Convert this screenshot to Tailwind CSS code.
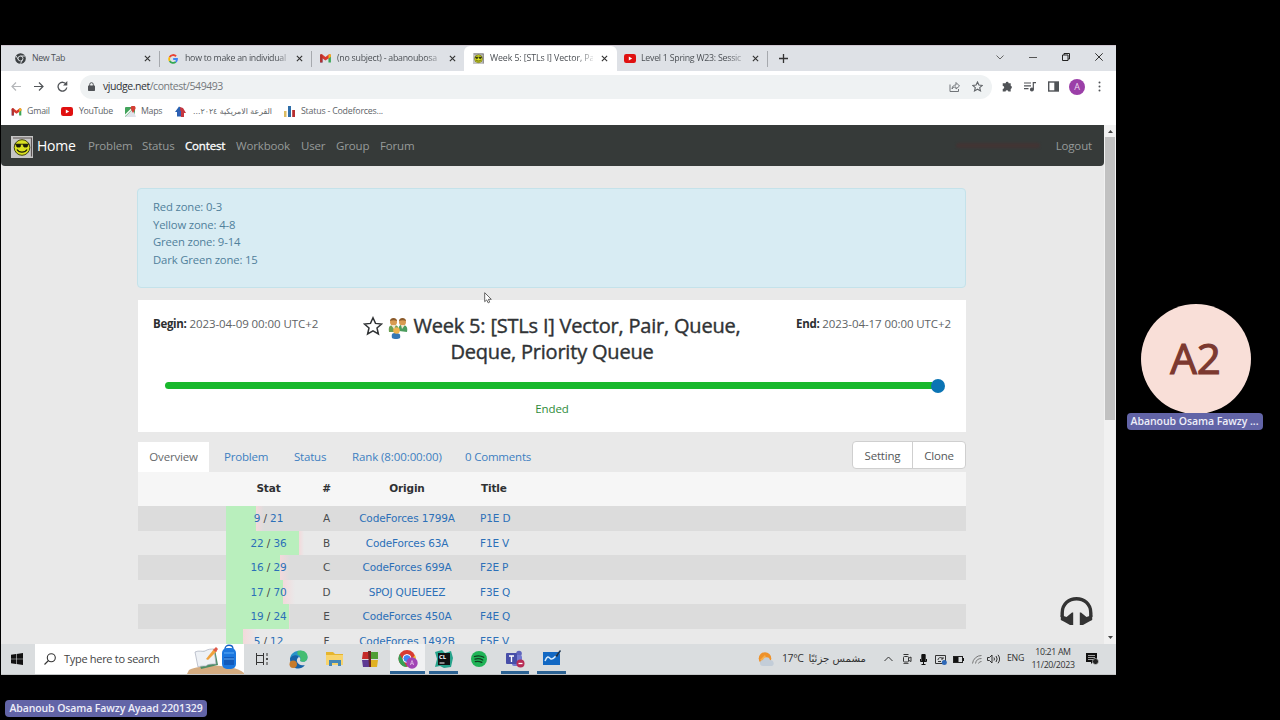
<!DOCTYPE html>
<html lang="en">
<head>
  <meta charset="UTF-8" />
  <meta name="viewport" content="width=device-width, initial-scale=1.0" />
  <script src="https://cdn.jsdelivr.net/npm/@tailwindcss/browser@4"></script>
  <title>Week 5: [STLs I] Vector, Pair, Queue, Deque, Priority Queue</title>
</head>
<body class="bg-black w-[1280px] h-[720px] overflow-hidden flex font-['Open_Sans','DejaVu_Sans',sans-serif] whitespace-nowrap">

  <!-- Shared icons -->
  <svg class="hidden">
    <symbol id="close" viewBox="0 0 8 8"><path d="M1 1l6 6M7 1l-6 6" stroke="#333" stroke-width="1.3" fill="none"/></symbol>
    <symbol id="gmail" viewBox="0 0 12 10">
      <path d="M0 1.5V9.5h2.7V4z" fill="#4a7fd6"/><path d="M12 1.5V9.5H9.300V4z" fill="#3aa757"/>
      <path d="M0 1.500C0 .2 1.500-.2 2.500 .6L6 3.400 9.500 .6C10.500-.2 12 .2 12 1.500V3L6 7.300 0 3z" fill="#d93a30"/>
      <path d="M9.300 1v4L12 3V1.500C12 0 10.500-.2 9.300 1z" fill="#f2b51e"/>
      <path d="M0 1.500V9.500h2.700V1C1.500-.2 0 0 0 1.500z" fill="#b5302a"/>
    </symbol>
    <symbol id="youtube" viewBox="0 0 12 9"><rect width="12" height="9" rx="2.200" fill="#e01010"/><path d="M4.800 2.500v4L8.200 4.500z" fill="#fff"/></symbol>
    <symbol id="smiley" viewBox="0 0 22 22">
      <rect width="22" height="22" fill="#c6c6c6"/><path d="M2 2h18.500v18.500" fill="none" stroke="#5c5555" stroke-width="1.200"/>
      <circle cx="11" cy="11.500" r="7.800" fill="#d9e021" stroke="#43460c"/>
      <path d="M3.500 8.200h15M5 8.500h4.700l-.6 2.500H6zM12 8.500h5l-1 2.500h-3z" fill="#1b1b0a" stroke="#1b1b0a" stroke-width=".8"/>
      <path d="M6 13.500c2 3.500 8 3.500 10 0" fill="none" stroke="#1b1b0a" stroke-width="1.200"/>
    </symbol>
  </svg>

  <!-- Shared screen -->
  <div class="w-[1116px] h-full shrink-0 flex flex-col pl-px">
    <div class="h-[45px] shrink-0"></div>

    <main class="h-[630px] flex flex-col bg-[#e9e9e9] overflow-hidden">

      <!-- Tab strip -->
      <div class="h-[26px] shrink-0 flex items-center bg-[#dee1e6] border-t border-[#cfc6d0] text-[8.800px] text-[#4c5055]">
        <div class="w-[159px] h-4 shrink-0 flex items-center pl-[14px] pr-2 border-r border-[#a6a9ae]">
          <svg class="size-[11px] mr-[6px]" viewBox="0 0 12 12"><circle cx="6" cy="6" r="5.800" fill="#3c4043"/><circle cx="6" cy="6" r="2.700" fill="#3c4043" stroke="#dee1e6"/><path d="M6 3.300h5M3.700 7.300L1.200 3.200M8.300 7.300L6 11.500" stroke="#dee1e6"/></svg>
          <span class="flex-1 tracking-[-0.4px]">New Tab</span>
          <svg class="size-[7px]"><use href="#close"/></svg>
        </div>
        <div class="w-[152px] h-4 shrink-0 flex items-center pl-2 pr-2 border-r border-[#a6a9ae]">
          <svg class="size-[10px] mr-[7px]" viewBox="0 0 12 12" fill="none" stroke-width="2.200"><path d="M9.700 2.700A4.800 4.800 0 0 0 2 3.800" stroke="#ea4335"/><path d="M2 3.800a4.800 4.800 0 0 0 0 4.500" stroke="#fbbc05"/><path d="M2 8.300a4.800 4.800 0 0 0 7.300 1.200" stroke="#34a853"/><path d="M9.300 9.500A4.800 4.800 0 0 0 10.800 6H6.200" stroke="#4285f4"/></svg>
          <span class="w-[104px] tracking-[-0.27px] [mask-image:linear-gradient(90deg,#000_88%,#0003)]">how to make an individual</span>
          <svg class="size-[7px] ml-auto"><use href="#close"/></svg>
        </div>
        <div class="w-[152px] h-4 shrink-0 flex items-center pl-2 pr-2">
          <svg class="w-[11px] h-[9px] mr-[6px]"><use href="#gmail"/></svg>
          <span class="w-[104px] tracking-[-0.25px] [mask-image:linear-gradient(90deg,#000_85%,#0003)]">(no subject) - abanoubosa</span>
          <svg class="size-[7px] ml-auto"><use href="#close"/></svg>
        </div>
        <div class="w-[153px] h-full shrink-0 flex items-center pl-[9px] pr-[9px] bg-white rounded-t-md">
          <svg class="size-[11px] mr-[6px]"><use href="#smiley"/></svg>
          <span class="w-[103px] tracking-[-0.1px] [mask-image:linear-gradient(90deg,#000_85%,#0003)]">Week 5: [STLs I] Vector, Pa</span>
          <svg class="size-[7px] ml-auto"><use href="#close"/></svg>
        </div>
        <div class="w-[151px] h-4 shrink-0 flex items-center pl-[7px] pr-2 border-r border-[#a6a9ae]">
          <svg class="w-3 h-[9px] mr-[5px]"><use href="#youtube"/></svg>
          <span class="w-[103px] tracking-[-0.25px] [mask-image:linear-gradient(90deg,#000_85%,#0003)]">Level 1 Spring W23: Sessic</span>
          <svg class="size-[7px] ml-auto"><use href="#close"/></svg>
        </div>
        <svg class="size-[9px] ml-[11px]" viewBox="0 0 9 9"><path d="M4.500 0v9M0 4.500h9" stroke="#333" stroke-width="1.300"/></svg>
        <div class="ml-auto mr-[13px] mb-[3px] flex items-center gap-[25px]">
          <svg class="size-2" viewBox="0 0 8 8" fill="none" stroke="#666"><path d="M.5 2.500L4 6l3.500-3.500"/></svg>
          <svg class="size-2" viewBox="0 0 8 8" stroke="#555"><path d="M0 4.500h8"/></svg>
          <svg class="size-2" viewBox="0 0 8 8" fill="none" stroke="#222"><path d="M.5 2h5.500v5.500H.5zM2 2V.5h5.500V6H6"/></svg>
          <svg class="size-2" viewBox="0 0 8 8" stroke="#333"><path d="M.3.300l7.400 7.400M7.700.300L.3 7.700"/></svg>
        </div>
      </div>

      <!-- Toolbar -->
      <div class="h-[31px] shrink-0 flex items-center bg-white pl-[10px]">
        <svg class="w-[10px] h-[9px]" viewBox="0 0 10 9" fill="none" stroke="#b4b6b9" stroke-width="1.200"><path d="M10 4.500H1M5 .5l-4 4 4 4"/></svg>
        <svg class="w-[10px] h-[9px] ml-[13px]" viewBox="0 0 10 9" fill="none" stroke="#505357" stroke-width="1.200"><path d="M0 4.500h9M5 .5l4 4-4 4"/></svg>
        <svg class="size-[11px] ml-[13px]" viewBox="0 0 11 11"><path d="M9.300 3.500A4.400 4.400 0 1 0 9.800 6.500" fill="none" stroke="#505357" stroke-width="1.300"/><path d="M10.300 0v4.500H6z" fill="#505357"/></svg>
        <div class="ml-[12px] w-[912px] h-6 rounded-full bg-[#eff2f3] flex items-center pl-[8px] pr-[9px] text-[10.500px] text-[#74787c]">
          <svg class="w-[7px] h-[9px] mr-[8px]" viewBox="0 0 7 9"><rect y="3.500" width="7" height="5.500" rx=".7" fill="#505357"/><path d="M1.700 4V2.500a1.800 1.800 0 0 1 3.600 0V4" fill="none" stroke="#505357"/></svg>
          <span class="flex-1 tracking-[-0.45px]"><span class="text-[#303236]">vjudge.net</span>/contest/549493</span>
          <svg class="size-[11px] mr-[12px]" viewBox="0 0 11 11" fill="none" stroke="#707478"><path d="M1 3.500v7h8.500V8M3 8c.3-3 2-4 4-4V1.500L10.500 5 7 8V6c-2 0-3 .5-4 2z"/></svg>
          <svg class="size-[11px]" viewBox="0 0 11 11" fill="none" stroke="#606468" stroke-width="1.100"><path d="M5.500 1l1.400 3.100 3.400.3-2.600 2.200.8 3.300-3-1.700-3 1.700.8-3.300L.7 4.400l3.400-.3z"/></svg>
        </div>
        <svg class="size-[11px] ml-[10px]" viewBox="0 0 12 12"><path d="M4 2.500a1.600 1.600 0 0 1 3.200 0h2.300v2.800a1.700 1.700 0 0 1 0 3.300v2.900H6.900a1.500 1.500 0 0 0-3 0H.8V8.700a1.600 1.600 0 0 0 0-3.200v-3z" fill="#505357"/></svg>
        <svg class="w-3 h-[11px] ml-[11px]" viewBox="0 0 12 11" fill="none" stroke="#505357" stroke-width="1.200"><path d="M0 2h7M0 4.800h7M0 7.600h4.500M9.300 8.500V1.600H12"/><circle cx="7.900" cy="8.500" r="1.400" fill="#505357"/></svg>
        <svg class="size-[11px] ml-[12px]" viewBox="0 0 11 11"><rect x=".7" y="1" width="9.600" height="9" fill="none" stroke="#505357" stroke-width="1.400"/><rect x="6.300" y="1" width="4" height="9" fill="#505357"/></svg>
        <div class="size-4 ml-[10px] rounded-full bg-[#9b3fa8] text-[#ecd7ef] text-[9px] flex items-center justify-center">A</div>
        <svg class="w-[3px] h-[11px] ml-[13px]" viewBox="0 0 3 11" fill="#505357"><circle cx="1.500" cy="1.500" r="1"/><circle cx="1.500" cy="5.500" r="1"/><circle cx="1.500" cy="9.500" r="1"/></svg>
      </div>

      <!-- Bookmarks -->
      <div class="h-[23px] shrink-0 flex items-center bg-white pb-[4px] pl-[10px] text-[8.800px] text-[#606468]">
        <svg class="w-[11px] h-[8px] mr-[5px]"><use href="#gmail"/></svg><span class="w-[34px] tracking-[-0.2px]">Gmail</span>
        <svg class="w-3 h-[9px] mr-[6px]"><use href="#youtube"/></svg><span class="w-[46px] tracking-[-0.35px]">YouTube</span>
        <svg class="size-[11px] mr-[5px]" viewBox="0 0 11 11"><rect y="1" width="10" height="10" rx="1" fill="#43a45c"/><path d="M0 11L8 3l3 8z" fill="#dfe3ea"/><path d="M0 9.500L8.500 1" stroke="#fff" stroke-width="1.300"/><path d="M8 7L5.800 3a2.500 2.500 0 1 1 4.600 0z" fill="#d33f35"/></svg><span class="w-[34px] tracking-[-0.3px]">Maps</span>
        <svg class="size-[11px] mr-[7px]" viewBox="0 0 11 11"><path d="M0 6l4-5.500L8 3v7.500H2V6z" fill="#2860b0"/><path d="M5 1l3 1 3 5H9v4H6z" fill="#c6363e"/><path d="M3 5h3v4H3z" fill="#315fb5"/></svg>
        <span dir="rtl" class="w-[79px] mr-[12px] font-['DejaVu_Sans',sans-serif] text-[7.800px]">القرعة الامريكية ٢٠٢٤...</span>
        <svg class="size-[11px] mr-[6px]" viewBox="0 0 11 11"><rect x="0" y="5" width="2.500" height="6" fill="#dbbc62"/><rect x="4" y="0" width="3" height="11" fill="#2e6da8"/><rect x="8.200" y="4" width="2.800" height="7" fill="#b62e30"/></svg>
        <span class="tracking-[-0.2px]">Status - Codeforces...</span>
      </div>

      <!-- Page -->
      <div class="h-[519px] shrink-0 flex overflow-hidden">
        <div class="w-[1103px] shrink-0 flex flex-col">

          <!-- Site nav -->
          <nav class="h-[41px] shrink-0 flex items-center bg-[#363a39] rounded-b-sm pl-[10px] pr-[12px] text-[11.500px] tracking-[-0.15px] text-[#979a99]">
            <svg class="size-[22px] mr-[4px] mt-[3px]"><use href="#smiley"/></svg>
            <a class="w-[51px] text-[14px] tracking-[-0.2px] text-white">Home</a>
            <a class="w-[54px]">Problem</a>
            <a class="w-[43px]">Status</a>
            <a class="w-[51px] text-white [-webkit-text-stroke:0.3px]">Contest</a>
            <a class="w-[65px]">Workbook</a>
            <a class="w-[35px]">User</a>
            <a class="w-[44px]">Group</a>
            <a>Forum</a>
            <div class="ml-auto mr-4 h-[5px] w-[84px] rounded-full bg-[#4a3030]/60 blur-[1px]"></div>
            <a>Logout</a>
          </nav>

          <div class="w-[829px] ml-[136px] mt-[22px] h-[100px] shrink-0 rounded-sm border border-[#c4e2ea] bg-[#d8ecf3] pl-[15px] pt-[9px] text-[11.300px] leading-[17.500px] tracking-[-0.15px] text-[#50809b]">
            <p>Red zone: 0-3</p>
            <p>Yellow zone: 4-8</p>
            <p>Green zone: 9-14</p>
            <p>Dark Green zone: 15</p>
          </div>

          <!-- Contest header -->
          <div class="w-[828px] ml-[137px] mt-3 h-[132px] shrink-0 bg-white text-[#303335]">
            <div class="flex justify-between px-[15px] pt-[13px]">
              <div class="w-[190px] pt-[2px] text-[11.500px] tracking-[-0.080px] text-[#606365]"><b class="text-[#2c2e30] tracking-[-0.3px]">Begin:</b> 2023-04-09 00:00 UTC+2</div>
              <h1 class="text-center text-[20px] leading-[25px] tracking-[-0.2px] [-webkit-text-stroke:0.4px]">
                <svg class="inline size-5 align-[-3px]" viewBox="0 0 20 20" fill="none" stroke="#303335" stroke-width="1.500"><path d="M10 1.800l2.500 5.600 6.100.6-4.600 4 1.400 6L10 14.900 4.600 18 6 12 1.400 8l6.100-.6z"/></svg>
                <svg class="inline w-5 h-[22px] align-[-6px]" viewBox="0 0 20 22"><path d="M1 15c-1-6 1-7 5-7s5 2 4 7z" fill="#6ba052"/><path d="M11 14c-1-6 1-6 4-6s5 2 4 7z" fill="#4b9c5d"/><circle cx="5.500" cy="5" r="3.500" fill="#d89b51"/><circle cx="14.500" cy="5" r="3.500" fill="#d89b51"/><path d="M2 4c0-4 7-4 7 0-2-1-5-1-7 0zM11 4c0-4 7-4 7 0-2-1-5-1-7 0z" fill="#8a5a2b"/><path d="M4 21c-1-5 1-5 4-5s5 1 4 5c-2 1.300-6 1.300-8 0z" fill="#3477b5"/><circle cx="8.500" cy="13.500" r="3.300" fill="#edb24d"/><path d="M3 8l3 4 2-4zM13 8l1 4 3-4z" fill="#f4e5ca"/></svg>
                Week 5: [STLs I] Vector, Pair, Queue,<br>Deque, Priority Queue
              </h1>
              <div class="w-[190px] pt-[2px] text-right text-[11.500px] tracking-[-0.080px] text-[#606365]"><b class="text-[#2c2e30] tracking-[-0.3px]">End:</b> 2023-04-17 00:00 UTC+2</div>
            </div>
            <div class="ml-[27px] mt-[14px] h-[15px] flex items-center">
              <div class="w-[767px] h-[7px] bg-[#18b82c] rounded-l-sm"></div>
              <div class="size-[14px] -ml-px rounded-full bg-[#0b74b4]"></div>
            </div>
            <p class="mt-[8px] text-center text-[11.500px] leading-4 tracking-[-0.1px] text-[#2e8b3a]">Ended</p>
          </div>

          <!-- Tabs -->
          <div class="w-[828px] ml-[137px] mt-[9px] h-[31px] shrink-0 flex text-[11.500px] tracking-[-0.2px] text-[#3d7fc1]">
            <div class="w-[71px] mt-px mr-[15px] flex items-center justify-center bg-white text-[#66696b]">Overview</div>
            <div class="w-[70px] mt-px flex items-center">Problem</div>
            <div class="w-[58px] mt-px flex items-center">Status</div>
            <div class="w-[113px] mt-px flex items-center tracking-[-0.1px]">Rank (8:00:00:00)</div>
            <div class="mt-px flex items-center">0 Comments</div>
            <div class="ml-auto h-[28px] flex border border-[#cfcfcf] rounded-sm bg-white text-[#55585a] divide-x divide-[#cfcfcf]">
              <div class="w-[60px] pt-px flex items-center justify-center">Setting</div>
              <div class="w-[52px] pt-px flex items-center justify-center">Clone</div>
            </div>
          </div>

          <!-- Problem table -->
          <table class="w-[828px] ml-[137px] shrink-0 table-fixed font-['DejaVu_Sans',sans-serif] text-[10.500px] tracking-[-0.150px] text-center text-[#2c70b8]">
            <colgroup><col class="w-[88px]"><col class="w-[85px]"><col class="w-[31px]"><col class="w-[130px]"><col></colgroup>
            <thead class="bg-[#f6f6f6] text-[#2f3133]">
              <tr class="h-[34px]"><th></th><th>Stat</th><th>#</th><th>Origin</th><th class="pl-[9px] text-left">Title</th></tr>
            </thead>
            <tbody id="problems"></tbody>
          </table>
        </div>

        <!-- Scrollbar -->
        <div class="w-3 shrink-0 flex flex-col items-center bg-[#f1f1f1]">
          <svg class="w-[5px] h-3" viewBox="0 0 5 12"><path d="M0 8l2.500-3L5 8z" fill="#444"/></svg>
          <div class="w-[10px] h-[283px] bg-[#c1c1c1]"></div>
          <svg class="w-[5px] h-3 mt-auto" viewBox="0 0 5 12"><path d="M0 4l2.500 3L5 4z" fill="#444"/></svg>
        </div>
      </div>

      <!-- Taskbar -->
      <div class="h-[31px] shrink-0 flex items-center bg-[#dadddf] border-b border-[#c3c5c6] text-[#333]">
        <svg class="size-3 ml-[10px] mr-[12px]" viewBox="0 0 12 12" fill="#111"><path d="M0 1.800l5-.8v4.700H0zM5.600.9L12 0v5.700H5.600zM0 6.300h5V11l-5-.8zM5.600 6.300H12V12l-6.400-.9z"/></svg>
        <div class="w-[209px] h-full flex items-center bg-white pl-[9px]">
          <svg class="size-3 mr-[8px]" viewBox="0 0 12 12" fill="none" stroke="#333" stroke-width="1.100"><circle cx="7.300" cy="4.700" r="4"/><path d="M4.500 7.500L.5 11.500"/></svg>
          <span class="text-[11px] tracking-[-0.3px] text-[#444]">Type here to search</span>
          <svg class="w-[57px] h-[30px] ml-auto self-end" viewBox="0 0 57 30">
            <path d="M0 30l2-4C12 21 44 19 57 29v1z" fill="#d5ac80"/>
            <path d="M9 9l19-4 3 16-17 4z" fill="#4c8d64"/><path d="M8 8c4-2 7 0 10-1 3-2 6-2 9-2l2 15c-5 0-8 0-10 2-3 0-6 0-8 1z" fill="#eef1f5" stroke="#a7adbb" stroke-width=".7"/>
            <path d="M19 15l8-10 3 2-9 9z" fill="#efa23d"/><path d="M26 6l3-3 2 2-2 3z" fill="#df5b4c"/>
            <path d="M38 5c0-5 8-5 8 0" fill="none" stroke="#1463c4" stroke-width="1.300"/><rect x="35" y="4" width="14" height="21" rx="5" fill="#1b77df"/><path d="M37 13h10v8H37z" fill="#125abb"/><path d="M37 9h10M37 15h10" stroke="#6ab4fa" stroke-width=".9"/>
          </svg>
        </div>
        <svg class="w-[13px] h-3 ml-[11px]" viewBox="0 0 13 12" fill="none" stroke="#333"><path d="M1.500 0v2.500h7V0M1.500 12V9.500h7V12M1.500 2.500v7h7v-7zM12 0v3M12 9v3"/><circle cx="12" cy="6" r=".7" fill="#333"/></svg>
        <svg class="size-[19px] ml-[21px]" viewBox="0 0 18 18"><path d="M1 8C2-1 17-2 17.500 7c.3 4-4 5-7 3.500 1-1.500.5-4-3-4C4 6.500 2 8 1 11z" fill="#2793c9"/><path d="M8 1c6-2 10 2 9.500 6-.4 4-4 5-7 3.500 1-3 0-6-2.500-6z" fill="#44bd72"/><path d="M1 8c2-4 8-4 8-1-3 2-2 8 6 7.500-5 6-14 3-14-6.500z" fill="#1762a8"/><circle cx="4" cy="13.500" r="3.500" fill="#c87b2b"/></svg>
        <svg class="w-[18px] h-[16px] ml-[18px]" viewBox="0 0 18 16"><path d="M0 1h7l2 2h8v11H0z" fill="#e6b52e"/><path d="M0 4h17v10H0z" fill="#f8d46d"/><path d="M3 15V9h12v6h-3v-3H6v3z" fill="#4687b5"/></svg>
        <svg class="size-[17px] ml-[18px]" viewBox="0 0 17 17"><path d="M1 1h7v7H0z" fill="#c52a28"/><path d="M9 1h7v7H9z" fill="#4f9e36"/><path d="M0 9h7v7H1z" fill="#5e3a93"/><path d="M9 9h7l-1 7H9z" fill="#e0b122"/><path d="M6 0h3v16H7z" fill="#6b2424"/></svg>
        <div class="w-[35px] h-full ml-[11px] flex items-center justify-center bg-[#f0f1f2] border-b-[3px] border-[#2c6293]">
          <svg class="size-5 mt-[3px]" viewBox="0 0 20 20"><circle cx="9" cy="9.500" r="8.500" fill="#d93b30"/><path d="M1.700 5.200L9 18A8.500 8.500 0 0 1 1.700 5.200z" fill="#35a155"/><path d="M17 6a8.500 8.500 0 0 1-8 12l4-7z" fill="#f0bd2a"/><circle cx="9" cy="9.500" r="4" fill="#4285f4" stroke="#fff"/><circle cx="14" cy="14" r="5.700" fill="#a144b5"/><path d="M12.300 16L14 11.500l1.700 4.500M13 14.700h2" fill="none" stroke="#e9cdee" stroke-width=".7"/></svg>
        </div>
        <div class="w-[29px] h-full ml-[4px] flex items-center justify-center border-b-[3px] border-[#2c6293]">
          <svg class="size-[18px] mt-[3px]" viewBox="0 0 18 18"><path d="M0 2l7-2 3 3 6-2 2 7-2 9-7 1-4-2-5 1 2-8z" fill="#27a38c"/><rect x="3" y="3" width="12" height="12" fill="#111"/><text x="4" y="9" font-size="6" font-weight="700" fill="#fff">CL</text><path d="M4.500 13h5" stroke="#fff"/></svg>
        </div>
        <svg class="size-4 ml-[13px]" viewBox="0 0 16 16"><circle cx="8" cy="8" r="8" fill="#20b357"/><path d="M3.500 5.500c3-1 6.500-.8 9.200.8M4 8.200c2.500-.8 5.400-.5 7.800.8M4.300 10.700c2.200-.6 4.600-.3 6.500.7" fill="none" stroke="#103d20" stroke-width="1.300" stroke-linecap="round"/></svg>
        <div class="w-[28px] h-full ml-[14px] flex items-center justify-center border-b-[3px] border-[#2c6293]">
          <svg class="w-[19px] h-[18px] mt-[3px]" viewBox="0 0 19 18"><circle cx="13" cy="3.500" r="2.800" fill="#5f65bd"/><rect x="6" y="5" width="10" height="11" rx="2" fill="#7278cf"/><rect x="0" y="3" width="11" height="11" rx="1" fill="#474ea8"/><path d="M3 6h5M5.500 6v6" stroke="#fff" stroke-width="1.300"/><circle cx="14.500" cy="13.500" r="4" fill="#b82d56"/><path d="M12.500 13.500h4" stroke="#fff" stroke-width="1.300"/></svg>
        </div>
        <div class="w-[29px] h-full ml-[8px] flex items-center justify-center border-b-[3px] border-[#2c6293]">
          <svg class="w-[18px] h-[16px] mt-px" viewBox="0 0 18 16"><rect y="2" width="17" height="13" fill="#1268c3"/><path d="M2 11c3-7 4-3 6-2 3 1 4-3 9-7" fill="none" stroke="#d7ebfc" stroke-width="1.500"/><path d="M12 6l5-6 1 1-4 6z" fill="#16304c"/></svg>
        </div>
        <div class="ml-auto pr-[17px] flex items-center">
          <svg class="w-[17px] h-[15px] mr-[7px]" viewBox="0 0 17 15"><circle cx="7" cy="6.500" r="6.300" fill="#ee922b"/><path d="M2 8l5-5 2 5z" fill="#f6b04f"/><path d="M5 14a3 3 0 0 1 0-6c1-3 6-4 7 0 4 0 5 5 2 6z" fill="#c3cdd8"/></svg>
          <span class="w-[27px] text-[10.500px] tracking-[-0.4px]">17°C</span>
          <span dir="rtl" class="w-[57px] font-['DejaVu_Sans',sans-serif] text-[10.200px]">مشمس جزئيًا</span>
          <svg class="w-[9px] h-[6px] ml-[18px]" viewBox="0 0 9 6" fill="none" stroke="#333"><path d="M.5 5l4-4 4 4"/></svg>
          <svg class="size-[10px] ml-[9px]" viewBox="0 0 10 10" fill="none" stroke="#333"><rect x="1.500" y="2.500" width="5" height="5.500" rx="1"/><path d="M7 4l2-1v4.500L7 6.500M1.500.5h5M1.500 9.700h5"/></svg>
          <svg class="w-[7px] h-[11px] ml-[8px]" viewBox="0 0 7 11"><rect x="1.300" width="4.400" height="7.500" rx="1" fill="#111"/><path d="M.5 5v2.500h6V5M3.500 8v2.500M1.500 10.500h4" fill="none" stroke="#111"/></svg>
          <svg class="w-[12px] h-[11px] ml-[8px]" viewBox="0 0 12 11"><path d="M.5 1.500h10v8H.5z" fill="none" stroke="#333"/><path d="M3 6c0-3 4-3 5-1M8 3v2H6M3 7.500h3" fill="none" stroke="#333"/><circle cx="9.300" cy="8.500" r="2.500" fill="#2e68b7"/></svg>
          <svg class="w-[11px] h-[7px] ml-[6px]" viewBox="0 0 11 7"><rect x=".5" y=".5" width="9" height="6" fill="none" stroke="#222"/><path d="M1 1h4.500v5H1zM10 2h1v3h-1z" fill="#111"/></svg>
          <svg class="size-[10px] ml-[8px]" viewBox="0 0 10 10" fill="none" stroke="#777"><path d="M.5 9.500a9 9 0 0 1 9-8M3.500 9.500a6 6 0 0 1 6-5M6.500 9.500a3 3 0 0 1 3-2"/></svg>
          <svg class="w-[13px] h-[10px] ml-[5px]" viewBox="0 0 13 10" fill="none" stroke="#333"><path d="M.5 3.500h2L5 1v8L2.500 6.500h-2zM7 3.500a3 3 0 0 1 0 3M9 2a5 5 0 0 1 0 6M11 .8a7 7 0 0 1 0 8.500"/></svg>
          <span class="w-[18px] ml-[7px] text-[8.800px] tracking-[-0.3px]">ENG</span>
          <div class="w-[46px] ml-[5px] text-center text-[8.800px] leading-[13px] tracking-[-0.35px]">10:21 AM<br>11/20/2023</div>
          <svg class="w-[13px] h-[12px] ml-[10px]" viewBox="0 0 13 12"><path d="M0 0h11v9H7l-2 2V9H0z" fill="#111"/><path d="M2 2.500h7M2 4.500h7M2 6.500h5" stroke="#ddd" stroke-width=".7"/><circle cx="9.500" cy="8.500" r="3" fill="#222" stroke="#dadddf" stroke-width=".6"/></svg>
        </div>
      </div>
    </main>

    <div class="w-[202px] h-[17px] mt-[25px] ml-[4px] flex items-center justify-center rounded-sm bg-[#6264a7] text-[10.500px] font-semibold text-[#eeeef8] tracking-[-0.1px]">Abanoub Osama Fawzy Ayaad 2201329</div>
  </div>

  <!-- Participant -->
  <aside class="flex-1 flex flex-col items-center pt-[304px] pr-[5px]">
    <div class="size-[110px] rounded-full bg-[#f9dfd8] flex items-center justify-center pb-[3px] text-[42px] leading-none text-[#7c3930] [-webkit-text-stroke:1.200px]">A2</div>
    <div class="w-[136px] h-[17px] -mt-px -ml-[2px] z-10 flex items-center justify-center rounded-sm bg-[#6264a7] text-[10.500px] font-semibold text-[#eeeef8] tracking-[-0.05px]">Abanoub Osama Fawzy ...</div>
  </aside>

  <!-- Floating support button -->
  <svg class="absolute left-[1060px] top-[597px] w-[33px] h-[30px]" viewBox="0 0 33 30">
    <path d="M2.200 20v-4C2.200-3 30.800-3 30.800 16v4" fill="none" stroke="#333" stroke-width="3.400"/>
    <path d="M.8 18v5l3 1.500L10 28h3.200V15.500H12L6.500 20zM32.200 18v5l-3 1.500L23 28h-3.200V15.500H21L26.500 20z" fill="#333"/>
  </svg>

  <!-- Mouse pointer -->
  <svg class="absolute left-[484px] top-[292px] w-2 h-3" viewBox="0 0 8 12"><path d="M.7.700v9l2-1.800 1.500 3 1.500-.8-1.300-2.800H7.300z" fill="#fff" stroke="#555" stroke-width=".9"/></svg>

  <script>
    // done and failed are bar lengths in px
    const problems = [
      { ok: 9, all: 21, id: "A", origin: "CodeForces 1799A", title: "P1E D", done: 30, failed: 38 },
      { ok: 22, all: 36, id: "B", origin: "CodeForces 63A", title: "F1E V", done: 73, failed: 78 },
      { ok: 16, all: 29, id: "C", origin: "CodeForces 699A", title: "F2E P", done: 54, failed: 64 },
      { ok: 17, all: 70, id: "D", origin: "SPOJ QUEUEEZ", title: "F3E Q", done: 57, failed: 69 },
      { ok: 19, all: 24, id: "E", origin: "CodeForces 450A", title: "F4E Q", done: 63, failed: 64 },
      { ok: 5, all: 12, id: "F", origin: "CodeForces 1492B", title: "F5E V", done: 17, failed: 31 },
    ];
    document.getElementById("problems").innerHTML = problems.map((p) => `
      <tr class="h-[24.500px] odd:bg-[#dcdcdc] *:pt-[2px]">
        <td></td>
        <td style="background: linear-gradient(90deg, #b9efbd ${p.done}px, #f3d9db ${p.done}px, transparent ${p.failed}px)">${p.ok} <span class="text-[#444]">/</span> ${p.all}</td>
        <td class="text-[#4a4c4e]">${p.id}</td>
        <td>${p.origin}</td>
        <td class="pl-2 text-left">${p.title}</td>
      </tr>`).join("");
  </script>
</body>
</html>
